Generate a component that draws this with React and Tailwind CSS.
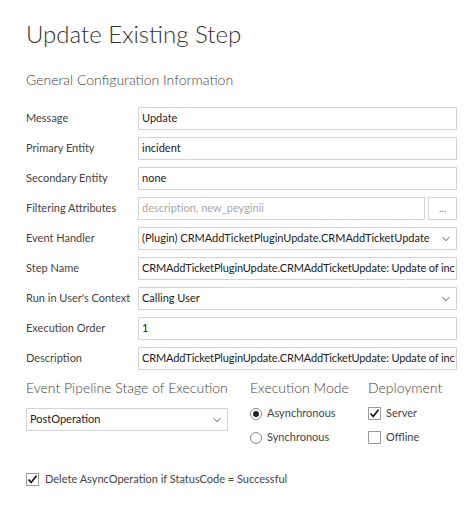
import React from 'react'

const font = { fontFamily: 'Lato, "Open Sans", sans-serif' }

function Chevron() {
  return (
    <svg width="10" height="6" viewBox="0 0 10 6" className="shrink-0">
      <path d="M1.5 1.2 L5 4.6 L8.5 1.2" fill="none" stroke="#555" strokeWidth="1" />
    </svg>
  )
}

function Field({ label, children }) {
  return (
    <div className="grid grid-cols-[112px_1fr] items-center h-[23px]">
      <div className="text-[11px] text-[#444] whitespace-nowrap">{label}</div>
      {children}
    </div>
  )
}

function TextBox({ value, muted, tight }) {
  return (
    <div className={`h-[23px] border border-[#d4d4d4] px-[3px] flex items-center overflow-hidden whitespace-nowrap text-[11px] ${tight ? 'tracking-[-0.12px]' : ''} ${muted ? 'text-[#a8a8a8]' : 'text-[#222]'}`}>
      {value}
    </div>
  )
}

function SelectBox({ value }) {
  return (
    <div className="h-[23px] border border-[#d4d4d4] pl-[3px] pr-[5px] flex items-center justify-between overflow-hidden whitespace-nowrap text-[11px] text-[#222]">
      <span className="overflow-hidden">{value}</span>
      <Chevron />
    </div>
  )
}

function CheckBox({ checked }) {
  return (
    <div className="w-[13px] h-[13px] border border-[#9a9a9a] bg-white flex items-center justify-center shrink-0">
      {checked && (
        <svg width="11" height="11" viewBox="0 0 11 11">
          <path d="M1.5 5.5 L4.2 8.5 L9.5 1.8" fill="none" stroke="#111" strokeWidth="1.7" />
        </svg>
      )}
    </div>
  )
}

function Radio({ checked }) {
  return (
    <div className="w-[12px] h-[12px] rounded-full border border-[#8a8a8a] bg-white flex items-center justify-center shrink-0">
      {checked && <div className="w-[6px] h-[6px] rounded-full bg-[#222]" />}
    </div>
  )
}

function App() {
  // the box only shows the start of the step name
  const stepName = 'CRMAddTicketPluginUpdate.CRMAddTicketUpdate: Update of inc'

  return (
    <div className="w-[474px] h-[526px] bg-white pl-[26px] pr-[17px] text-[#444] overflow-hidden" style={font}>
      {/* Header */}
      <h1 className="pt-[17px] text-[24px] font-light leading-[34px] text-[#333]">Update Existing Step</h1>
      <h2 className="mt-[19px] text-[14px] font-light leading-[20px] text-[#444]">General Configuration Information</h2>

      {/* Fields */}
      <div className="mt-[17px] flex flex-col gap-[7px]">
        <Field label="Message"><TextBox value="Update" /></Field>
        <Field label="Primary Entity"><TextBox value="incident" /></Field>
        <Field label="Secondary Entity"><TextBox value="none" /></Field>
        <Field label="Filtering Attributes">
          <div className="flex gap-[3px]">
            <div className="flex-1 min-w-0"><TextBox value="description, new_peyginii" muted /></div>
            <div className="w-[29px] h-[23px] border border-[#d4d4d4] flex items-center justify-center text-[10px] text-[#666] leading-none pb-[2px]">...</div>
          </div>
        </Field>
        <Field label="Event Handler"><SelectBox value="(Plugin) CRMAddTicketPluginUpdate.CRMAddTicketUpdate" /></Field>
        <Field label="Step Name"><TextBox value={stepName} tight /></Field>
        <Field label="Run in User's Context"><SelectBox value="Calling User" /></Field>
        <Field label="Execution Order"><TextBox value="1" /></Field>
        <Field label="Description"><TextBox value={stepName} tight /></Field>
      </div>

      {/* Pipeline / mode / deployment */}
      <div className="mt-[8px] flex">
        <div className="w-[224px]">
          <div className="text-[14px] font-light leading-[20px]">Event Pipeline Stage of Execution</div>
          <div className="mt-[10px] w-[202px]"><SelectBox value="PostOperation" /></div>
        </div>
        <div className="w-[118px]">
          <div className="text-[14px] font-light leading-[20px]">Execution Mode</div>
          <div className="mt-[9px] flex flex-col gap-[11px] text-[11px] text-[#444]">
            <div className="flex items-center gap-[5px] h-[13px]"><Radio checked />Asynchronous</div>
            <div className="flex items-center gap-[5px] h-[13px]"><Radio />Synchronous</div>
          </div>
        </div>
        <div>
          <div className="text-[14px] font-light leading-[20px]">Deployment</div>
          <div className="mt-[9px] flex flex-col gap-[11px] text-[11px] text-[#444]">
            <div className="flex items-center gap-[5px] h-[13px]"><CheckBox checked />Server</div>
            <div className="flex items-center gap-[5px] h-[13px]"><CheckBox />Offline</div>
          </div>
        </div>
      </div>

      {/* Footer option */}
      <div className="mt-[27px] flex items-center gap-[6px] text-[11px] text-[#444]">
        <CheckBox checked />
        Delete AsyncOperation if StatusCode = Successful
      </div>
    </div>
  )
}

export default App
